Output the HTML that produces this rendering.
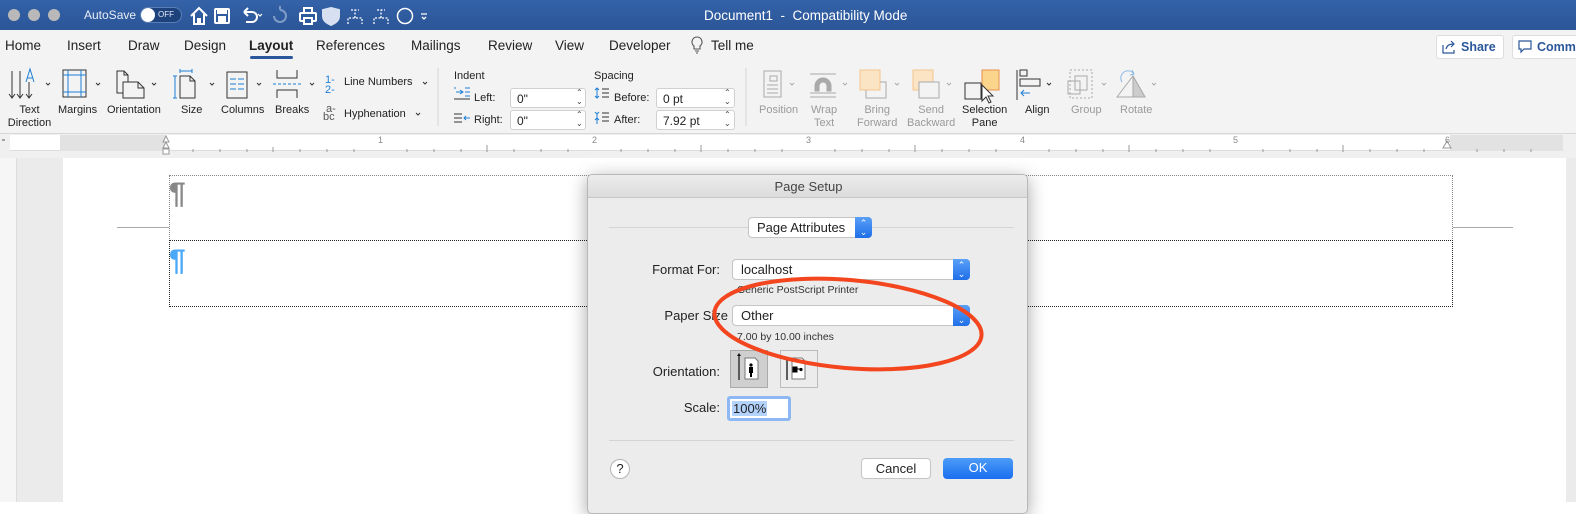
<!DOCTYPE html>
<html><head><meta charset="utf-8"><style>
*{box-sizing:border-box;margin:0;padding:0}
body{width:1576px;height:502px;overflow:hidden;position:relative;background:#fff;font-family:"Liberation Sans",sans-serif;color:#222}
.a{position:absolute;white-space:nowrap}
.tb{left:0;top:0;width:1576px;height:30px;background:linear-gradient(#3462a8,#2b5597)}
.tabs{left:0;top:30px;width:1576px;height:30px;background:#f3f3f3}
.rib{left:0;top:60px;width:1576px;height:74px;background:#f3f3f3;border-bottom:1px solid #d8d8d8}
.tab{font-size:13.5px;top:38px;color:#222}
.lbl{font-size:11px;color:#222;text-align:center;line-height:13px}
.dis{color:#9a9a9a}
.fld{background:#fff;border:1px solid #d0d0d0;border-radius:3px;font-size:12px;padding:3px 0 0 6px;height:20px}
.dlg{left:587px;top:174px;width:441px;height:340px;background:#ececec;border:1px solid #b8b8b8;border-radius:5px;box-shadow:0 4px 18px rgba(0,0,0,.35);overflow:hidden}
.pop{background:#fff;border:1px solid #c4c4c4;border-radius:4px;font-size:13px;padding:2px 0 0 8px;height:21px}
.pop .ar{position:absolute;right:-1px;top:-1px;width:17px;height:21px;background:linear-gradient(#5aa0f8,#1f6fe8);border-radius:0 4px 4px 0;color:#fff;font-size:9px;text-align:center;line-height:9px;padding-top:2px}
.dl{font-size:13px;color:#222;text-align:right}
.pil{font-size:30px;font-weight:bold;line-height:30px}
</style></head><body>
<div class="a tb"></div>
<div class="a" style="left:8px;top:9px;width:12px;height:12px;border-radius:6px;background:#b9b9b9"></div>
<div class="a" style="left:28px;top:9px;width:12px;height:12px;border-radius:6px;background:#b9b9b9"></div>
<div class="a" style="left:48px;top:9px;width:12px;height:12px;border-radius:6px;background:#b9b9b9"></div>
<div class="a" style="left:84px;top:8px;font-size:12px;color:#e8eef8">AutoSave</div>
<div class="a" style="left:140px;top:7px;width:42px;height:16px;border-radius:8px;background:#1e437c;border:1px solid #5a7fb8"></div>
<div class="a" style="left:141px;top:8px;width:14px;height:14px;border-radius:7px;background:#fff"></div>
<div class="a" style="left:158px;top:10px;font-size:8px;color:#dfe7f4">OFF</div>
<svg class="a" style="left:188px;top:4px" width="240" height="24" viewBox="0 0 240 24" fill="none" stroke="#fff" stroke-width="2">
<path d="M3 12 L11 4 L19 12 M6 10 V20 H10 V15 H12 V20 H16 V10"/>
<rect x="27" y="5" width="14" height="14" rx="1"/><rect x="30" y="5" width="8" height="4" fill="#fff"/><rect x="31" y="13" width="6" height="5" fill="#fff"/>
<path d="M56 8 H64 A5 5 0 0 1 64 18 H58 M56 8 L60 4 M56 8 L60 12"/>
<path d="M70 10 L72 12 L74 10" stroke-width="1.2"/>
<path d="M92 6 A6 6 0 1 1 86 12 M92 6 L92 2" stroke="#7f9cc9"/>
<rect x="112" y="9" width="16" height="8" rx="1"/><rect x="116" y="4" width="8" height="5"/><rect x="116" y="14" width="8" height="6" fill="#2e5a9e"/>
<path d="M143 4 L151 6 V12 C151 17 147 19 143 21 C139 19 135 17 135 12 V6 Z" fill="#d6e0f0" stroke="#d6e0f0"/>
<path d="M160 20 V14 H174 V20 M167 14 V6 M163 6 H171" stroke-width="1.3" stroke-dasharray="2 1.5"/>
<path d="M186 20 V14 H200 V20 M193 14 V6 M189 6 H197" stroke-width="1.3" stroke-dasharray="2 1.5"/>
<circle cx="217" cy="12" r="7.5" stroke-width="1.5"/>
<path d="M233 10 H239 M234 13 L236 15 L238 13" stroke-width="1.3"/>
</svg>
<div class="a" style="left:704px;top:8px;font-size:13.5px;color:#fff">Document1&nbsp; - &nbsp;Compatibility Mode</div>

<div class="a tabs"></div>
<div class="a tab" style="left:5px">Home</div>
<div class="a tab" style="left:67px">Insert</div>
<div class="a tab" style="left:128px">Draw</div>
<div class="a tab" style="left:184px">Design</div>
<div class="a tab" style="left:249px;font-weight:bold">Layout</div>
<div class="a" style="left:250px;top:56px;width:43px;height:3px;background:#2b579a;border-radius:2px"></div>
<div class="a tab" style="left:316px">References</div>
<div class="a tab" style="left:411px">Mailings</div>
<div class="a tab" style="left:488px">Review</div>
<div class="a tab" style="left:555px">View</div>
<div class="a tab" style="left:609px">Developer</div>
<svg class="a" style="left:690px;top:36px" width="14" height="18" fill="none" stroke="#555" stroke-width="1.1"><path d="M7 1 A5 5 0 0 1 10 10 V13 H4 V10 A5 5 0 0 1 7 1 M5 15 H9 M6 17 H8"/></svg>
<div class="a tab" style="left:711px">Tell me</div>
<div class="a" style="left:1436px;top:35px;width:68px;height:24px;background:#fff;border:1px solid #ddd;border-radius:3px"></div>
<svg class="a" style="left:1442px;top:40px" width="14" height="14" fill="none" stroke="#2b579a" stroke-width="1.2"><path d="M1 5 V13 H12 V10 M4 9 C5 5 8 4 11 4 M9 1 L12 4 L9 7"/></svg>
<div class="a" style="left:1461px;top:40px;font-size:12.5px;color:#2b579a;font-weight:bold">Share</div>
<div class="a" style="left:1512px;top:35px;width:70px;height:24px;background:#fff;border:1px solid #ddd;border-radius:3px"></div>
<svg class="a" style="left:1518px;top:40px" width="14" height="14" fill="none" stroke="#2b579a" stroke-width="1.2"><path d="M1 1 H13 V9 H6 L3 12 V9 H1 Z"/></svg>
<div class="a" style="left:1537px;top:40px;font-size:12.5px;color:#2b579a;font-weight:bold">Comm</div>

<div class="a rib"></div>
<svg class="a" style="left:0;top:60px" width="1200" height="74" fill="none" stroke="#333" stroke-width="1">
<path d="M12 11 V38 M9 34 L12 38 L15 34 M20 11 V38 M17 34 L20 38 L23 34 M29 22 V38 M26 34 L29 38 L32 34"/>
<path d="M26 22 L30 9 L34 22 M27.5 18 H32.5" stroke="#1d7fd6"/>
<path d="M46 23 L48 25 L50 23"/>
<rect x="63" y="10" width="23" height="27"/><path d="M63 15 H86 M63 32 H86 M68 10 V37 M81 10 V37" stroke="#1d7fd6"/>
<path d="M96 23 L98 25 L100 23"/>
<path d="M117 11 H124 L128 15 V33 H117 Z M124 11 V15 H128"/><path d="M123 22 H138 L144 28 V38 H123 Z" fill="#f3f3f3"/><path d="M138 22 V28 H144"/>
<path d="M152 23 L154 25 L156 23"/>
<path d="M180 11 H192 M180 9 V13 M192 9 V13 M175 16 V38 M173 16 H177 M173 38 H177" stroke="#1d7fd6"/>
<path d="M180 16 H190 L195 21 V38 H180 Z M190 16 V21 H195"/>
<path d="M210 23 L212 25 L214 23"/>
<rect x="227" y="12" width="20" height="26"/><path d="M230 19 H236 M238 19 H244 M230 24 H236 M238 24 H244 M230 29 H236 M238 29 H244" stroke="#1d7fd6"/>
<path d="M257 23 L259 25 L261 23"/>
<path d="M277 10 V18 H297 V10 M277 38 V30 H297 V38"/><path d="M273 24 H301" stroke="#1d7fd6" stroke-dasharray="3 2"/>
<path d="M310 23 L312 25 L314 23"/>
<path d="M423 22 L425 24 L427 22 M416 53 L418 55 L420 53"/>
<path d="M438 8 V66 M746 8 V66" stroke="#d6d6d6"/>
<path d="M456 32 H463 M460 30 L463 32 L460 34 M465 28 H470 M465 32 H470 M465 36 H470 M454 28 H456" stroke="#1d7fd6"/><path d="M454 39 H470"/>
<path d="M454 54 H462 M454 58 H462 M454 62 H462"/><path d="M470 58 H464 M466 56 L464 58 L466 60" stroke="#1d7fd6"/>
<path d="M597 28 V38 M595 30 L597 28 L599 30 M595 36 L597 38 L599 36 M595 52 L597 54 L599 52 M597 54 V58 M595 60 L597 58 L599 60 M597 58 V64" stroke="#1d7fd6"/>
<path d="M602 29 H609 M602 33 H609 M602 37 H609 M602 53 H609 M602 57 H609 M602 61 H609"/>
<g stroke="#aaa"><rect x="764" y="11" width="17" height="26"/><rect x="770" y="16" width="7" height="5"/><path d="M767 25 H778 M767 29 H778 M767 33 H778"/>
<path d="M790 23 L792 25 L794 23"/>
<path d="M810 14 H836 M810 33 H836 M810 37 H836"/><path d="M815 26 A8 8 0 0 1 831 26 V31 H827 V26 A4 4 0 0 0 819 26 V31 H815 Z" fill="#aaa"/>
<path d="M843 23 L845 25 L847 23"/>
<rect x="860" y="10" width="20" height="20" fill="#fbe4c3" stroke="#f4c48e"/><path d="M880 22 H886 V38 H866 V30"/>
<path d="M895 23 L897 25 L899 23"/>
<rect x="913" y="10" width="20" height="20" fill="#fbe4c3" stroke="#f4c48e"/><rect x="919" y="22" width="20" height="16" fill="#f3f3f3"/>
<path d="M947 23 L949 25 L951 23"/></g>
<rect x="982" y="10" width="17" height="20" fill="#fbd58c" stroke="#e8904a"/><rect x="965" y="23" width="16" height="16" fill="#f3f3f3"/>
<path d="M982 25 L982 41 L986 37 L989 43 L991 42 L988 36 L993 36 Z" fill="#fff"/>
<path d="M1017 10 V40"/><rect x="1020" y="10" width="7" height="6"/><rect x="1020" y="19" width="20" height="7"/><path d="M1030 33 H1021 M1024 30 L1021 33 L1024 36" stroke="#1d7fd6"/>
<path d="M1047 23 L1049 25 L1051 23"/>
<g stroke="#aaa"><rect x="1070" y="10" width="22" height="28" stroke-dasharray="2 2"/><rect x="1075" y="16" width="12" height="14"/><rect x="1068" y="21" width="12" height="13"/>
<path d="M1102 23 L1104 25 L1106 23"/>
<path d="M1117 37 L1133 16 L1145 37 Z"/><path d="M1133 16 V37 L1145 37 Z" fill="#ccc"/><path d="M1122 22 A6 6 0 0 1 1134 14 M1132 10 L1134 14 L1130 15" stroke="#8ab9e8"/>
<path d="M1152 23 L1154 25 L1156 23"/></g>
</svg>
<div class="a lbl" style="left:2px;top:104px;width:55px">Text<br>Direction</div>
<div class="a lbl" style="left:58px;top:104px">Margins</div>
<div class="a lbl" style="left:107px;top:104px">Orientation</div>
<div class="a lbl" style="left:181px;top:104px">Size</div>
<div class="a lbl" style="left:221px;top:104px">Columns</div>
<div class="a lbl" style="left:275px;top:104px">Breaks</div>
<div class="a" style="left:325px;top:75px;font-size:11px;color:#1d7fd6;line-height:10px">1-<br>2-</div>
<div class="a lbl" style="left:344px;top:76px">Line Numbers</div>
<div class="a" style="left:323px;top:105px;font-size:11px;color:#555;line-height:8px">&nbsp;a-<br>bc</div>
<div class="a lbl" style="left:344px;top:108px">Hyphenation</div>
<div class="a lbl" style="left:454px;top:70px">Indent</div>
<div class="a lbl" style="left:474px;top:92px">Left:</div>
<div class="a lbl" style="left:474px;top:114px">Right:</div>
<div class="a fld" style="left:510px;top:88px;width:76px">0"</div>
<div class="a fld" style="left:510px;top:110px;width:76px">0"</div>
<div class="a lbl" style="left:594px;top:70px">Spacing</div>
<div class="a lbl" style="left:614px;top:92px">Before:</div>
<div class="a lbl" style="left:614px;top:114px">After:</div>
<div class="a fld" style="left:656px;top:88px;width:79px">0 pt</div>
<div class="a fld" style="left:656px;top:110px;width:79px">7.92 pt</div>
<div class="a" style="left:576px;top:88px;font-size:8px;line-height:9px;color:#444">&#8963;<br>&#8964;</div>
<div class="a" style="left:576px;top:110px;font-size:8px;line-height:9px;color:#444">&#8963;<br>&#8964;</div>
<div class="a" style="left:724px;top:88px;font-size:8px;line-height:9px;color:#444">&#8963;<br>&#8964;</div>
<div class="a" style="left:724px;top:110px;font-size:8px;line-height:9px;color:#444">&#8963;<br>&#8964;</div>
<div class="a lbl dis" style="left:759px;top:104px">Position</div>
<div class="a lbl dis" style="left:811px;top:104px">Wrap<br>Text</div>
<div class="a lbl dis" style="left:857px;top:104px">Bring<br>Forward</div>
<div class="a lbl dis" style="left:907px;top:104px">Send<br>Backward</div>
<div class="a lbl" style="left:962px;top:104px">Selection<br>Pane</div>
<div class="a lbl" style="left:1025px;top:104px">Align</div>
<div class="a lbl dis" style="left:1071px;top:104px">Group</div>
<div class="a lbl dis" style="left:1120px;top:104px">Rotate</div>

<div class="a" style="left:0;top:134px;width:1576px;height:24px;background:#f0f0f0"></div>
<div class="a" style="left:10px;top:135px;width:1553px;height:16px;background:#fff;border-bottom:1px solid #ddd"></div>
<div class="a" style="left:60px;top:135px;width:106px;height:16px;background:#e2e2e2"></div>
<div class="a" style="left:1450px;top:135px;width:113px;height:16px;background:#e2e2e2"></div>
<svg class="a" style="left:0;top:134px" width="1576" height="24" stroke="#999" fill="none">
<path d="M166 2 L163 8 H169 Z M166 8 L163 14 H169 Z M163 15 H169 V20 H163 Z" fill="#fff"/>
<path d="M1447 7 L1443 14 H1451 Z" fill="#fff"/>
<path d="M193 15 V18 M220 15 V18 M247 15 V18 M273 13 V18 M300 15 V18 M327 15 V18 M354 15 V18 M407 15 V18 M434 15 V18 M461 15 V18 M487 11 V18 M514 15 V18 M541 15 V18 M568 15 V18 M621 15 V18 M648 15 V18 M675 15 V18 M701 11 V18 M728 15 V18 M755 15 V18 M782 15 V18 M835 15 V18 M862 15 V18 M889 15 V18 M915 11 V18 M942 15 V18 M969 15 V18 M996 15 V18 M1049 15 V18 M1076 15 V18 M1103 15 V18 M1129 11 V18 M1156 15 V18 M1183 15 V18 M1210 15 V18 M1263 15 V18 M1290 15 V18 M1317 15 V18 M1343 11 V18 M1370 15 V18 M1397 15 V18 M1424 15 V18 M1477 15 V18 M1504 15 V18 M1531 15 V18"/>
<path d="M2 6 H5" stroke="#555"/>
</svg>
<div class="a" style="left:378px;top:135px;font-size:9px;color:#888">1</div>
<div class="a" style="left:592px;top:135px;font-size:9px;color:#888">2</div>
<div class="a" style="left:806px;top:135px;font-size:9px;color:#888">3</div>
<div class="a" style="left:1020px;top:135px;font-size:9px;color:#888">4</div>
<div class="a" style="left:1233px;top:135px;font-size:9px;color:#888">5</div>
<div class="a" style="left:1445px;top:135px;font-size:9px;color:#888">6</div>

<div class="a" style="left:0;top:158px;width:17px;height:344px;background:#f6f6f6;border-right:1px solid #ddd"></div>
<div class="a" style="left:17px;top:158px;width:46px;height:344px;background:#ebebeb"></div>
<div class="a" style="left:1566px;top:158px;width:10px;height:344px;background:#ebebeb"></div>
<div class="a" style="left:117px;top:227px;width:52px;height:1px;background:#aaa"></div>
<div class="a" style="left:1453px;top:227px;width:60px;height:1px;background:#aaa"></div>
<div class="a" style="left:169px;top:175px;width:1284px;height:66px;border:1px dotted #888"></div>
<div class="a" style="left:169px;top:240px;width:1284px;height:67px;border:1px dotted #222"></div>
<div class="a pil" style="left:169px;top:179px;color:#888">¶</div>
<div class="a pil" style="left:169px;top:246px;color:#4aa8f8">¶</div>

<div class="a dlg">
 <div class="a" style="left:0;top:0;width:441px;height:23px;background:linear-gradient(#ececec,#dcdcdc);border-bottom:1px solid #c8c8c8"></div>
 <div class="a" style="left:0;top:4px;width:441px;text-align:center;font-size:13px;color:#444">Page Setup</div>
 <div class="a" style="left:21px;top:52px;width:405px;height:1px;background:#d4d4d4"></div>
 <div class="a pop" style="left:160px;top:42px;width:124px">Page Attributes<div class="ar">&#8963;<br>&#8964;</div></div>
 <div class="a dl" style="left:40px;top:87px;width:92px">Format For:</div>
 <div class="a pop" style="left:144px;top:84px;width:238px">localhost<div class="ar">&#8963;<br>&#8964;</div></div>
 <div class="a" style="left:149px;top:109px;font-size:10.5px;color:#333">Generic PostScript Printer</div>
 <div class="a dl" style="left:40px;top:133px;width:100px">Paper Size</div>
 <div class="a pop" style="left:144px;top:130px;width:238px">Other<div class="ar">&#8963;<br>&#8964;</div></div>
 <div class="a" style="left:149px;top:156px;font-size:10.5px;color:#333">7.00 by 10.00 inches</div>
 <div class="a dl" style="left:40px;top:189px;width:92px">Orientation:</div>
 <div class="a" style="left:142px;top:175px;width:38px;height:38px;background:#cfcfcf;border:1px solid #aaa"></div>
 <div class="a" style="left:192px;top:175px;width:38px;height:38px;background:#ececec;border:1px solid #bbb"></div>
 <svg class="a" style="left:142px;top:175px" width="90" height="40"><path d="M7 6 L9 3 L11 6 H9.6 V30 H8.4 V6Z" fill="#111"/><path d="M15 8 H25 L28 11 V29 H15Z" fill="#fff" stroke="#777"/><circle cx="21" cy="15" r="1.6"/><path d="M19 17 H23 V23 H22 V27 H20 V23 H19Z"/>
 <path d="M57 8 V30" stroke="#111" stroke-width="1.3"/><path d="M62 8 H72 L75 11 V29 H62Z" fill="#fff" stroke="#777"/><path d="M63 17 H67 V22 H63Z M67 19 H70" stroke="#000"/><circle cx="71" cy="19.5" r="1.6"/></svg>
 <div class="a dl" style="left:40px;top:225px;width:92px">Scale:</div>
 <div class="a" style="left:139px;top:221px;width:64px;height:25px;border:3px solid #8eb8f4;border-radius:3px;background:#fff"></div>
 <div class="a" style="left:144px;top:226px;font-size:13px;background:#b3d3fc;padding:0 1px;line-height:15px">100%</div>
 <div class="a" style="left:21px;top:265px;width:405px;height:1px;background:#d4d4d4"></div>
 <div class="a" style="left:22px;top:284px;width:20px;height:20px;border-radius:10px;background:#fff;border:1px solid #b4b4b4;font-size:13px;text-align:center;line-height:18px">?</div>
 <div class="a" style="left:273px;top:283px;width:70px;height:21px;border-radius:4px;background:#fff;border:1px solid #c4c4c4;font-size:13px;text-align:center;line-height:19px">Cancel</div>
 <div class="a" style="left:355px;top:283px;width:70px;height:21px;border-radius:4px;background:linear-gradient(#4d9cf8,#1a6ef0);font-size:13px;text-align:center;line-height:20px;color:#fff">OK</div>
</div>
<svg class="a" style="left:0;top:0" width="1576" height="502"><ellipse cx="848" cy="324" rx="134" ry="44" transform="rotate(5 848 324)" fill="none" stroke="#f3461f" stroke-width="4"/></svg>
</body></html>
